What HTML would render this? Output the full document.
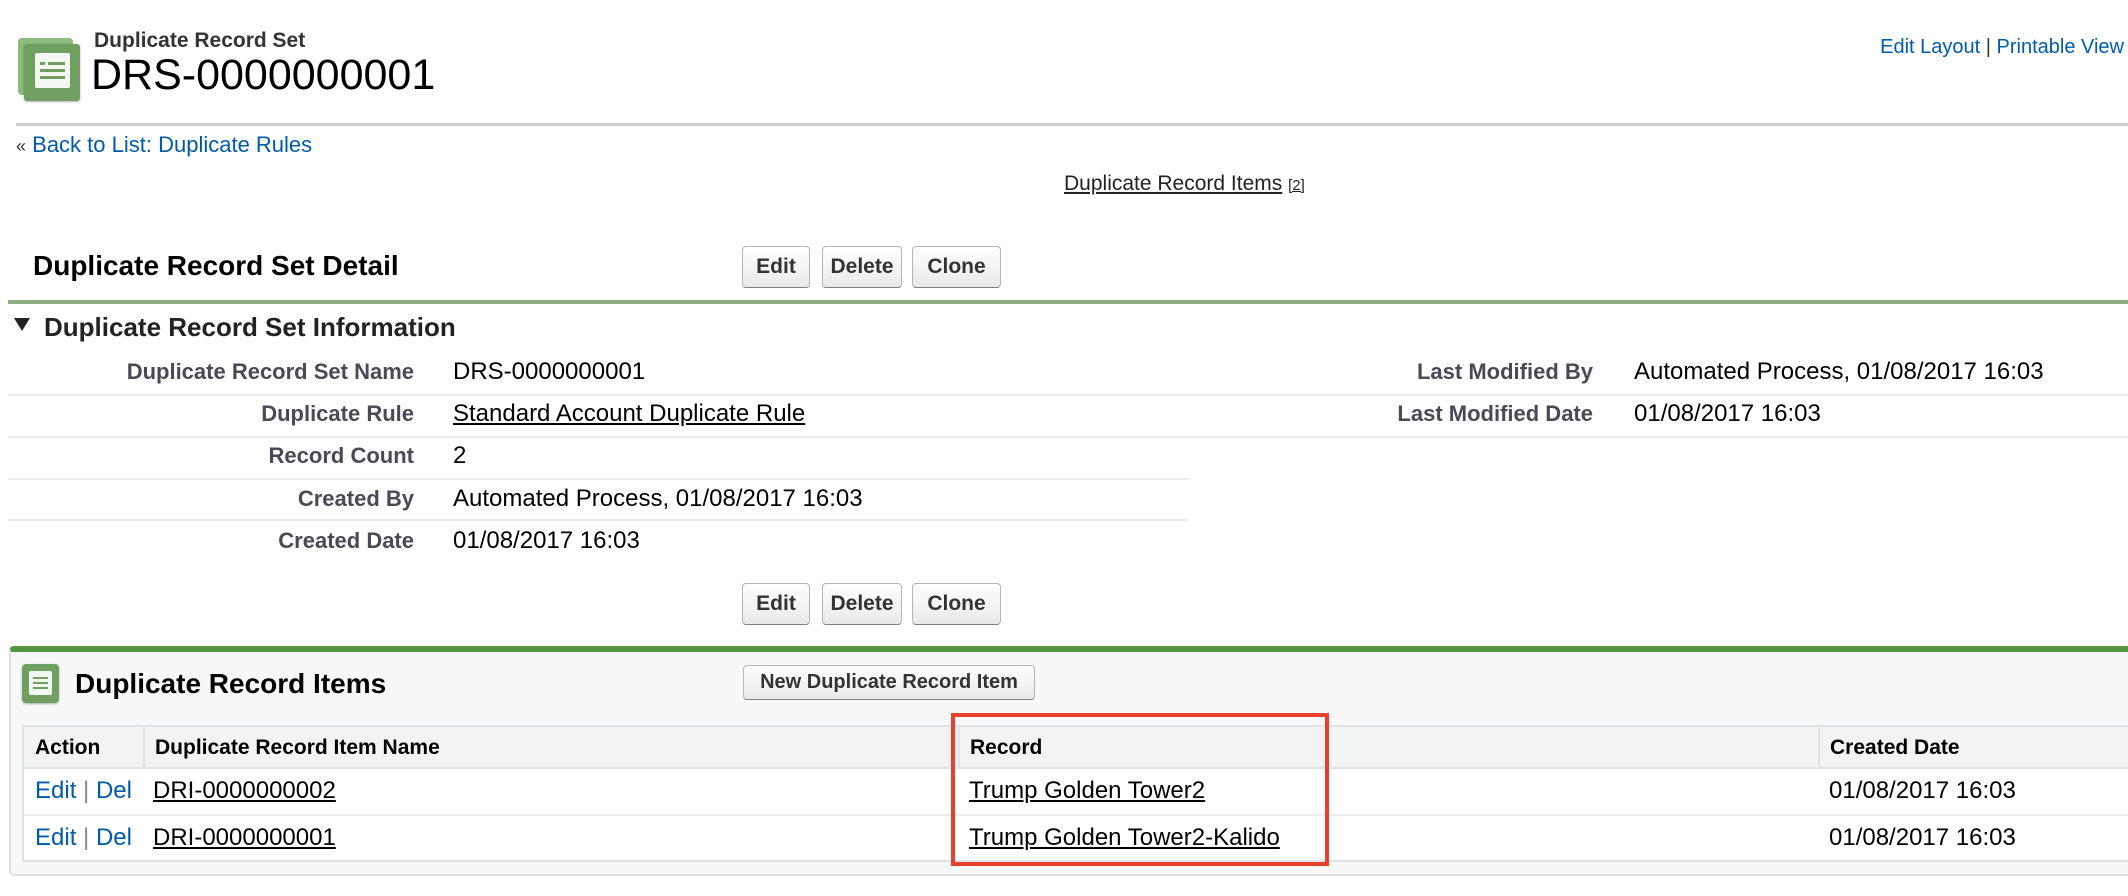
<!DOCTYPE html>
<html><head><meta charset="utf-8"><style>
*{margin:0;padding:0;box-sizing:border-box}
body{width:2128px;height:896px;background:#fff;font-family:"Liberation Sans",Arial,sans-serif;position:relative;overflow:hidden;color:#000}
.a{position:absolute;white-space:nowrap}
.blue{color:#015ba7}
.lbl{font-weight:bold;color:#4a4a56;font-size:22px;text-align:right;width:400px;left:14px}
.val{font-size:24px;left:453px}
.btn{position:absolute;height:42px;border:1px solid #b5b5b5;border-bottom-color:#7f7f7f;border-radius:4px;background:linear-gradient(#fff,#e9e9e9);font-weight:bold;font-size:21px;color:#333;text-align:center;line-height:40px}
.hr{position:absolute;height:2px;background:#ececec}
u{text-decoration:underline}
</style></head><body>
<!-- icon -->
<div class="a" style="left:18px;top:38px;width:55px;height:57px;background:#8cbb7c;border-radius:4px"></div>
<div class="a" style="left:24px;top:44px;width:56px;height:57px;background:#6fa062;border-radius:3px;box-shadow:0 1px 2px rgba(0,0,0,.3)"></div>
<div class="a" style="left:35px;top:53px;width:35px;height:35px;background:#f4f8f2;border-radius:2px"></div>
<div class="a" style="left:40px;top:62px;width:5px;height:3px;background:#6fa062"></div>
<div class="a" style="left:48px;top:62px;width:17px;height:3px;background:#6fa062"></div>
<div class="a" style="left:40px;top:69px;width:25px;height:3px;background:#6fa062"></div>
<div class="a" style="left:40px;top:76px;width:25px;height:3px;background:#6fa062"></div>

<div class="a" style="left:94px;top:29px;font-size:21px;font-weight:bold;color:#333">Duplicate Record Set</div>
<div class="a" style="left:91px;top:51px;font-size:43px">DRS-0000000001</div>
<div class="a blue" style="right:4px;top:36px;font-size:20px">Edit Layout <span style="color:#333">|</span> Printable View</div>
<div class="a" style="left:16px;top:123px;right:0;height:3px;background:#d0d0d0"></div>
<div class="a" style="left:16px;top:132px;font-size:22px"><span style="font-size:18px;color:#333">«</span> <span class="blue">Back to List: Duplicate Rules</span></div>
<div class="a" style="left:1064px;top:172px;font-size:21px;color:#222"><u>Duplicate Record Items</u> <u style="font-size:15px">[2]</u></div>

<div class="a" style="left:33px;top:250px;font-size:28px;font-weight:bold">Duplicate Record Set Detail</div>
<div class="btn" style="left:742px;top:246px;width:68px">Edit</div>
<div class="btn" style="left:822px;top:246px;width:80px">Delete</div>
<div class="btn" style="left:912px;top:246px;width:89px">Clone</div>
<div class="a" style="left:8px;top:300px;right:0;height:4px;background:#8aae7e"></div>

<div class="a" style="left:14px;top:318px;width:0;height:0;border-left:8px solid transparent;border-right:8px solid transparent;border-top:13px solid #222"></div>
<div class="a" style="left:44px;top:312px;font-size:26px;font-weight:bold;color:#222">Duplicate Record Set Information</div>

<div class="a lbl" style="top:359px">Duplicate Record Set Name</div>
<div class="a val" style="top:358px">DRS-0000000001</div>
<div class="a lbl" style="top:401px">Duplicate Rule</div>
<div class="a val" style="top:400px"><u>Standard Account Duplicate Rule</u></div>
<div class="a lbl" style="top:443px">Record Count</div>
<div class="a val" style="top:442px">2</div>
<div class="a lbl" style="top:486px">Created By</div>
<div class="a val" style="top:485px">Automated Process, 01/08/2017 16:03</div>
<div class="a lbl" style="top:528px">Created Date</div>
<div class="a val" style="top:527px">01/08/2017 16:03</div>
<div class="a lbl" style="top:359px;left:1193px">Last Modified By</div>
<div class="a val" style="top:358px;left:1634px">Automated Process, 01/08/2017 16:03</div>
<div class="a lbl" style="top:401px;left:1193px">Last Modified Date</div>
<div class="a val" style="top:400px;left:1634px">01/08/2017 16:03</div>
<div class="hr" style="left:8px;right:0;top:394px"></div>
<div class="hr" style="left:8px;right:0;top:436px"></div>
<div class="hr" style="left:8px;width:1182px;top:478px"></div>
<div class="hr" style="left:8px;width:1182px;top:519px"></div>

<div class="btn" style="left:742px;top:583px;width:68px">Edit</div>
<div class="btn" style="left:822px;top:583px;width:80px">Delete</div>
<div class="btn" style="left:912px;top:583px;width:89px">Clone</div>

<!-- related list -->
<div class="a" style="left:9px;top:646px;right:-10px;height:230px;background:#f8f8f8;border:2px solid #e0e0e0;border-top:6px solid #56963f;border-radius:5px 0 0 5px"></div>
<div class="a" style="left:22px;top:664px;width:37px;height:39px;background:#6fa062;border-radius:4px;box-shadow:0 1px 2px rgba(0,0,0,.3)"></div>
<div class="a" style="left:29px;top:671px;width:23px;height:24px;background:#f4f8f2;border-radius:2px"></div>
<div class="a" style="left:33px;top:677px;width:15px;height:2px;background:#6fa062"></div>
<div class="a" style="left:33px;top:682px;width:15px;height:2px;background:#6fa062"></div>
<div class="a" style="left:33px;top:687px;width:15px;height:2px;background:#6fa062"></div>
<div class="a" style="left:75px;top:668px;font-size:28px;font-weight:bold">Duplicate Record Items</div>
<div class="btn" style="left:743px;top:665px;width:292px;height:35px;line-height:33px;font-size:20px">New Duplicate Record Item</div>

<div class="a" style="left:22px;top:725px;right:0;height:137px;background:#fff;border:2px solid #e0e3e5;border-right:none"></div>
<div class="a" style="left:24px;top:727px;right:0;height:42px;background:#f2f3f3;border-bottom:2px solid #e0e3e5"></div>
<div class="a" style="left:143px;top:727px;width:2px;height:42px;background:#e0e3e5"></div>
<div class="a" style="left:958px;top:727px;width:2px;height:42px;background:#e0e3e5"></div>
<div class="a" style="left:1818px;top:727px;width:2px;height:42px;background:#e0e3e5"></div>
<div class="a" style="left:24px;top:814px;right:0;height:2px;background:#ececec"></div>
<div class="a" style="left:35px;top:736px;font-size:21px;font-weight:bold">Action</div>
<div class="a" style="left:155px;top:736px;font-size:21px;font-weight:bold">Duplicate Record Item Name</div>
<div class="a" style="left:970px;top:736px;font-size:21px;font-weight:bold">Record</div>
<div class="a" style="left:1830px;top:736px;font-size:21px;font-weight:bold">Created Date</div>

<div class="a" style="left:35px;top:777px;font-size:24px"><span class="blue">Edit</span> <span style="color:#888">|</span> <span class="blue">Del</span></div>
<div class="a" style="left:153px;top:777px;font-size:24px"><u>DRI-0000000002</u></div>
<div class="a" style="left:969px;top:777px;font-size:24px"><u>Trump Golden Tower2</u></div>
<div class="a" style="left:1829px;top:777px;font-size:24px">01/08/2017 16:03</div>
<div class="a" style="left:35px;top:824px;font-size:24px"><span class="blue">Edit</span> <span style="color:#888">|</span> <span class="blue">Del</span></div>
<div class="a" style="left:153px;top:824px;font-size:24px"><u>DRI-0000000001</u></div>
<div class="a" style="left:969px;top:824px;font-size:24px"><u>Trump Golden Tower2-Kalido</u></div>
<div class="a" style="left:1829px;top:824px;font-size:24px">01/08/2017 16:03</div>

<div class="a" style="left:951px;top:713px;width:378px;height:153px;border:4px solid #e8402a"></div>
</body></html>
